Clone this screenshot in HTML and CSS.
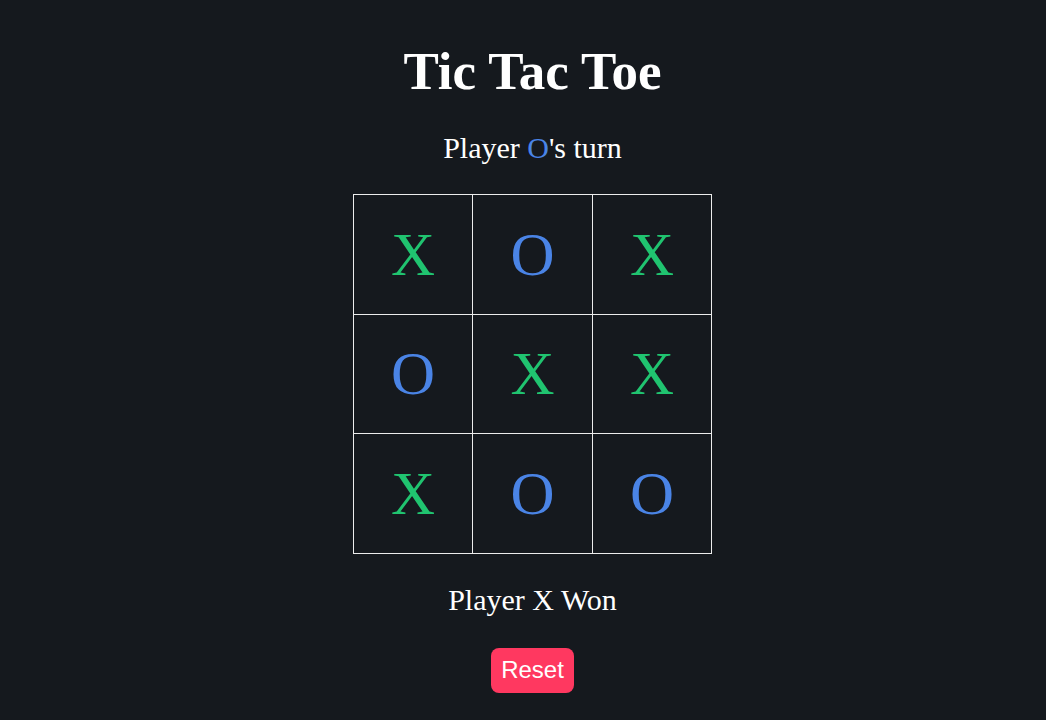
FILE: index.html
```html
<!DOCTYPE html>
<html>
<head>
<meta charset="utf-8">
<link rel="stylesheet" href="styles.css">
</head>
<body>
<main class="game">
  <h1 class="title">Tic Tac Toe</h1>
  <p class="turn">Player <span class="o">O</span>'s turn</p>
  <div class="board">
    <div class="cell x">X</div>
    <div class="cell o">O</div>
    <div class="cell x">X</div>
    <div class="cell o">O</div>
    <div class="cell x">X</div>
    <div class="cell x">X</div>
    <div class="cell x">X</div>
    <div class="cell o">O</div>
    <div class="cell o">O</div>
  </div>
  <p class="status">Player X Won</p>
  <button class="reset">Reset</button>
</main>
</body>
</html>
```
FILE: styles.css
```css
html, body {
  margin: 0;
  padding: 0;
  background: #15191e;
  color: #ffffff;
  font-family: "Liberation Serif", "Times New Roman", serif;
}
.game {
  display: flex;
  flex-direction: column;
  align-items: center;
  padding-top: 38px;
  padding-left: 19px;
}
.title {
  margin: 0;
  font-size: 53px;
  line-height: 66px;
  font-weight: bold;
}
.turn {
  margin: 26px 0 0;
  font-size: 30px;
  line-height: 36px;
}
.o { color: #4a84e6; }
.x { color: #20c470; }
.board {
  margin-top: 28px;
  display: grid;
  grid-template-columns: repeat(3, 119.5px);
  grid-auto-rows: 119.5px;
  border-left: 1px solid #ececec;
  border-top: 1px solid #ececec;
}
.cell {
  border-right: 1px solid #ececec;
  border-bottom: 1px solid #ececec;
  display: flex;
  align-items: center;
  justify-content: center;
  font-size: 61px;
  line-height: 1;
}
.status {
  margin: 28px 0 0;
  font-size: 30px;
  line-height: 36px;
}
.reset {
  margin-top: 30px;
  background: #ff3860;
  color: #ffffff;
  border: none;
  border-radius: 8px;
  font-family: "Liberation Sans", Arial, sans-serif;
  font-size: 24px;
  line-height: 28px;
  padding: 8px 10px 9px;
}
```
